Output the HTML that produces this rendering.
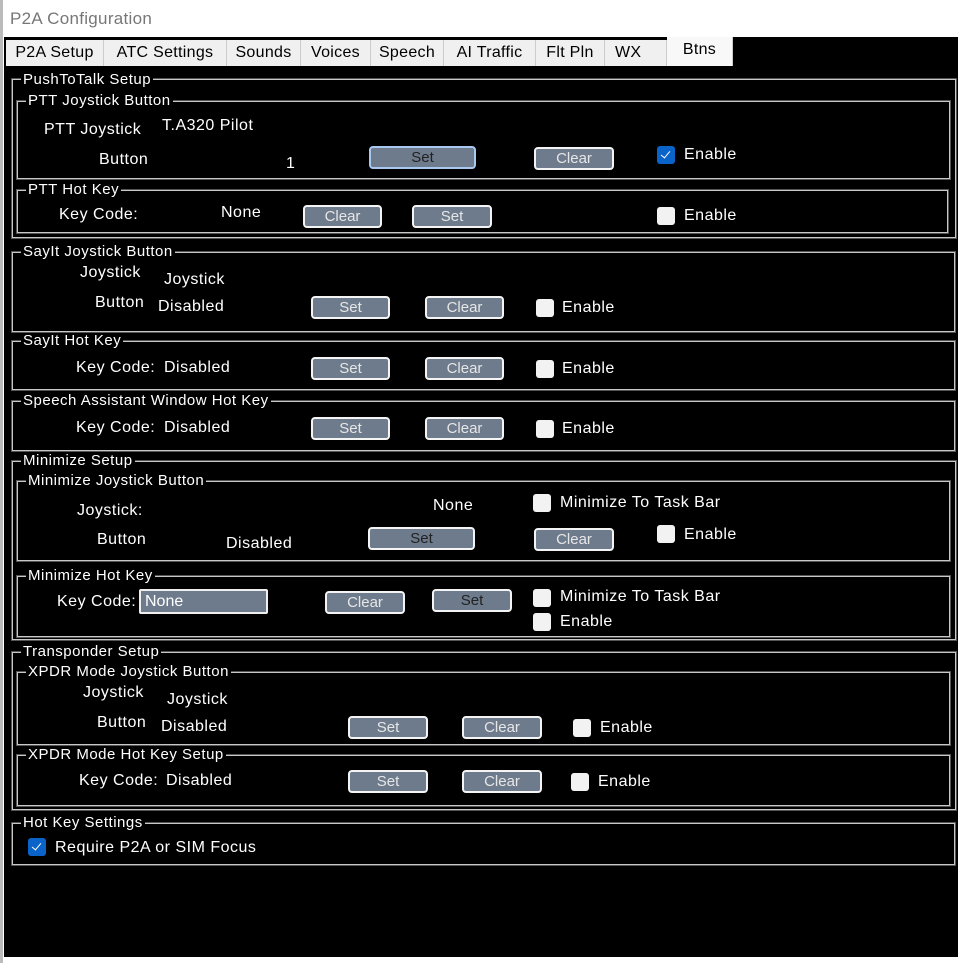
<!DOCTYPE html>
<html><head><meta charset="utf-8"><style>
*{margin:0;padding:0;box-sizing:border-box}
body{width:963px;height:963px;background:#fff;position:relative;overflow:hidden;font-family:"Liberation Sans","Noto Sans CJK JP",sans-serif}
.edge{position:absolute;left:0;top:0;width:3px;height:963px;background:#bbb}
.title{position:absolute;left:10px;top:9px;font-size:17px;color:#777;letter-spacing:0.3px}
.win{position:absolute;left:4px;top:37px;width:954px;height:920px;background:#000}
.tab{position:absolute;top:40px;height:26px;background:#f0f0f0;border-right:1px solid #ccc;font-size:16px;color:#000;text-align:center;line-height:26px;letter-spacing:0.3px}
.g{position:absolute;border:1px solid #c8c8c8;box-shadow:0 0 0 1px #555}
.gl{position:absolute;font-size:15px;color:#fff;background:#000;line-height:16px;padding:0 2px;white-space:nowrap;letter-spacing:0.5px}
.t{position:absolute;font-size:16px;line-height:18px;color:#fff;white-space:nowrap;letter-spacing:0.5px}
.b{position:absolute;height:23px;border:2px solid #f4f4f4;border-radius:4px;background:#6e7b8c;color:#e6e6e6;font-size:15px;text-align:center;line-height:19px}
.c{position:absolute;width:18px;height:18px;background:#f2f2f2;border-radius:3px}
.c.on{background:#0a63c9}
.c.on::after{content:"";position:absolute;left:6px;top:3px;width:4px;height:8px;border:solid #fff;border-width:0 1.5px 1.5px 0;transform:rotate(40deg)}
</style></head><body>
<div class="edge"></div>
<div class="title">P2A Configuration</div>
<div class="win"></div>
<div class="tab" style="left:6px;width:98px">P2A Setup</div>
<div class="tab" style="left:104px;width:123px">ATC Settings</div>
<div class="tab" style="left:227px;width:74px">Sounds</div>
<div class="tab" style="left:301px;width:70px">Voices</div>
<div class="tab" style="left:371px;width:73px">Speech</div>
<div class="tab" style="left:444px;width:92px">AI Traffic</div>
<div class="tab" style="left:536px;width:69px">Flt Pln</div>
<div class="tab" style="left:605px;width:62px;text-align:left;padding-left:10px">WX</div>
<div class="tab" style="left:667px;width:66px;top:37px;height:29px;background:#f8f8f8;line-height:26px">Btns</div>

<!-- groups -->
<div class="g" style="left:12px;top:79px;width:944px;height:159px"></div>
<div class="gl" style="left:21px;top:72px">PushToTalk Setup</div>
<div class="g" style="left:17px;top:101px;width:933px;height:78px"></div>
<div class="gl" style="left:26px;top:93px">PTT Joystick Button</div>
<div class="g" style="left:17px;top:190px;width:931px;height:43px"></div>
<div class="gl" style="left:26px;top:182px">PTT Hot Key</div>
<div class="g" style="left:12px;top:252px;width:943px;height:80px"></div>
<div class="gl" style="left:21px;top:244px">SayIt Joystick Button</div>
<div class="g" style="left:12px;top:341px;width:943px;height:49px"></div>
<div class="gl" style="left:21px;top:333px">SayIt Hot Key</div>
<div class="g" style="left:12px;top:401px;width:943px;height:50px"></div>
<div class="gl" style="left:21px;top:393px">Speech Assistant Window Hot Key</div>
<div class="g" style="left:12px;top:461px;width:944px;height:179px"></div>
<div class="gl" style="left:21px;top:453px">Minimize Setup</div>
<div class="g" style="left:17px;top:481px;width:933px;height:80px"></div>
<div class="gl" style="left:26px;top:473px">Minimize Joystick Button</div>
<div class="g" style="left:17px;top:576px;width:933px;height:61px"></div>
<div class="gl" style="left:26px;top:568px">Minimize Hot Key</div>
<div class="g" style="left:12px;top:652px;width:944px;height:158px"></div>
<div class="gl" style="left:21px;top:644px">Transponder Setup</div>
<div class="g" style="left:17px;top:672px;width:933px;height:73px"></div>
<div class="gl" style="left:26px;top:664px">XPDR Mode Joystick Button</div>
<div class="g" style="left:17px;top:755px;width:933px;height:51px"></div>
<div class="gl" style="left:26px;top:747px">XPDR Mode Hot Key Setup</div>
<div class="g" style="left:12px;top:823px;width:943px;height:42px"></div>
<div class="gl" style="left:21px;top:815px">Hot Key Settings</div>

<!-- PTT joystick -->
<div class="t" style="left:44px;top:121px">PTT Joystick</div>
<div class="t" style="left:162px;top:117px">T.A320 Pilot</div>
<div class="t" style="left:99px;top:151px">Button</div>
<div class="t" style="left:286px;top:155px">1</div>
<div class="b" style="left:369px;top:146px;width:107px;border-color:#a8c8f0;color:#222">Set</div>
<div class="b" style="left:534px;top:147px;width:80px">Clear</div>
<div class="c on" style="left:657px;top:146px"></div>
<div class="t" style="left:684px;top:146px">Enable</div>
<!-- PTT hot key -->
<div class="t" style="left:59px;top:206px">Key Code:</div>
<div class="t" style="left:221px;top:204px">None</div>
<div class="b" style="left:303px;top:205px;width:79px">Clear</div>
<div class="b" style="left:412px;top:205px;width:80px">Set</div>
<div class="c" style="left:657px;top:207px"></div>
<div class="t" style="left:684px;top:207px">Enable</div>
<!-- SayIt joystick -->
<div class="t" style="left:80px;top:264px">Joystick</div>
<div class="t" style="left:164px;top:271px">Joystick</div>
<div class="t" style="left:95px;top:294px">Button</div>
<div class="t" style="left:158px;top:298px">Disabled</div>
<div class="b" style="left:311px;top:296px;width:79px">Set</div>
<div class="b" style="left:425px;top:296px;width:79px">Clear</div>
<div class="c" style="left:536px;top:299px"></div>
<div class="t" style="left:562px;top:299px">Enable</div>
<!-- SayIt hot key -->
<div class="t" style="left:76px;top:359px">Key Code:</div>
<div class="t" style="left:164px;top:359px">Disabled</div>
<div class="b" style="left:311px;top:357px;width:79px">Set</div>
<div class="b" style="left:425px;top:357px;width:79px">Clear</div>
<div class="c" style="left:536px;top:360px"></div>
<div class="t" style="left:562px;top:360px">Enable</div>
<!-- Speech -->
<div class="t" style="left:76px;top:419px">Key Code:</div>
<div class="t" style="left:164px;top:419px">Disabled</div>
<div class="b" style="left:311px;top:417px;width:79px">Set</div>
<div class="b" style="left:425px;top:417px;width:79px">Clear</div>
<div class="c" style="left:536px;top:420px"></div>
<div class="t" style="left:562px;top:420px">Enable</div>
<!-- Minimize joystick -->
<div class="t" style="left:77px;top:502px">Joystick:</div>
<div class="t" style="left:433px;top:497px">None</div>
<div class="c" style="left:533px;top:494px"></div>
<div class="t" style="left:560px;top:494px">Minimize To Task Bar</div>
<div class="t" style="left:97px;top:531px">Button</div>
<div class="t" style="left:226px;top:535px">Disabled</div>
<div class="b" style="left:368px;top:527px;width:107px;color:#222">Set</div>
<div class="b" style="left:534px;top:528px;width:80px">Clear</div>
<div class="c" style="left:657px;top:525px"></div>
<div class="t" style="left:684px;top:526px">Enable</div>
<!-- Minimize hot key -->
<div class="t" style="left:57px;top:593px">Key Code:</div>
<div style="position:absolute;left:139px;top:589px;width:129px;height:25px;border:2px solid #eee;border-radius:2px;background:#6e7b8c;color:#fff;font-size:16px;line-height:21px;padding-left:4px">None</div>
<div class="b" style="left:325px;top:591px;width:80px">Clear</div>
<div class="b" style="left:432px;top:589px;width:80px;color:#222">Set</div>
<div class="c" style="left:533px;top:589px"></div>
<div class="t" style="left:560px;top:588px">Minimize To Task Bar</div>
<div class="c" style="left:533px;top:613px"></div>
<div class="t" style="left:560px;top:613px">Enable</div>
<!-- XPDR joystick -->
<div class="t" style="left:83px;top:684px">Joystick</div>
<div class="t" style="left:167px;top:691px">Joystick</div>
<div class="t" style="left:97px;top:714px">Button</div>
<div class="t" style="left:161px;top:718px">Disabled</div>
<div class="b" style="left:348px;top:716px;width:80px">Set</div>
<div class="b" style="left:462px;top:716px;width:80px">Clear</div>
<div class="c" style="left:573px;top:719px"></div>
<div class="t" style="left:600px;top:719px">Enable</div>
<!-- XPDR hot key -->
<div class="t" style="left:79px;top:772px">Key Code:</div>
<div class="t" style="left:166px;top:772px">Disabled</div>
<div class="b" style="left:348px;top:770px;width:80px">Set</div>
<div class="b" style="left:462px;top:770px;width:80px">Clear</div>
<div class="c" style="left:571px;top:773px"></div>
<div class="t" style="left:598px;top:773px">Enable</div>
<!-- Hot key settings -->
<div class="c on" style="left:28px;top:838px"></div>
<div class="t" style="left:55px;top:839px">Require P2A or SIM Focus</div>
</body></html>
